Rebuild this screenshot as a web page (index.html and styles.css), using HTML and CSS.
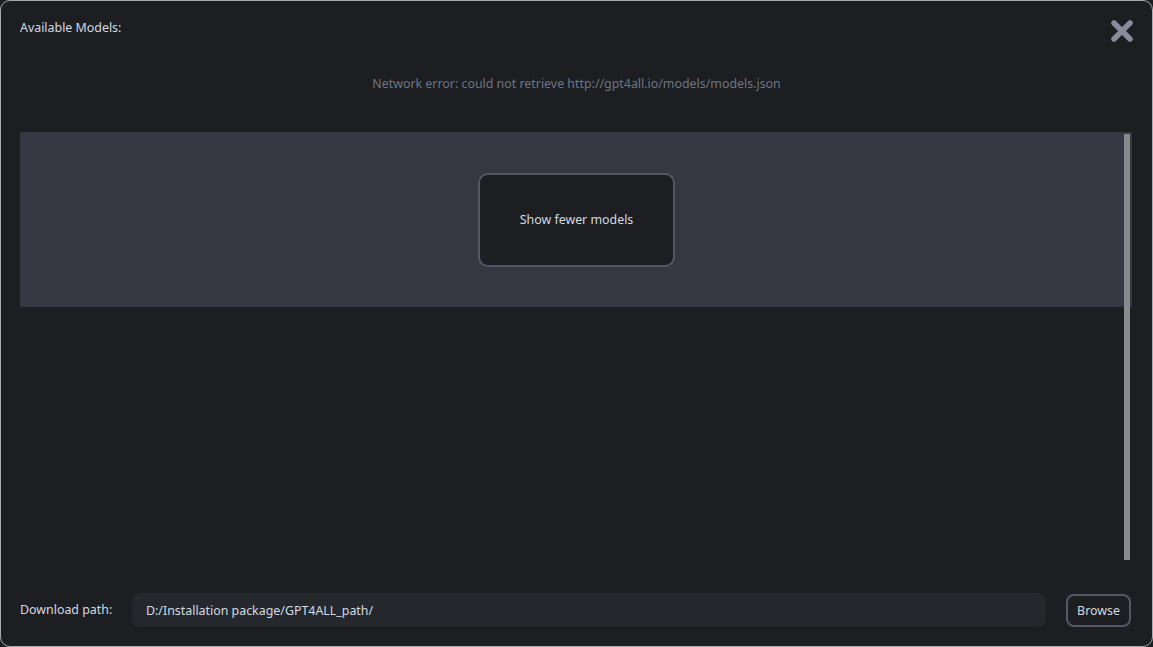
FILE: index.html
```html
<!DOCTYPE html>
<html>
<head>
<meta charset="utf-8">
<link rel="stylesheet" href="styles.css">
</head>
<body>
<div class="window">
  <div class="header">
    <div class="title">Available Models:</div>
    <div class="close">
      <svg width="24" height="24" viewBox="0 0 24 24"><path d="M4 4 L20 20 M20 4 L4 20" stroke="#8a8a9c" stroke-width="5.5" stroke-linecap="round"/></svg>
    </div>
  </div>
  <div class="error">Network error: could not retrieve http://gpt4all.io/models/models.json</div>
  <div class="listarea">
    <div class="list">
      <div class="panel">
        <button class="fewer">Show fewer models</button>
      </div>
    </div>
    <div class="scrollbar"><div class="thumb"></div></div>
  </div>
  <div class="footer">
    <div class="label">Download path:</div>
    <div class="path">D:/Installation package/GPT4ALL_path/</div>
    <button class="browse">Browse</button>
  </div>
</div>
</body>
</html>
```
FILE: styles.css
```css
* { box-sizing: border-box; }
html, body { margin: 0; padding: 0; background: #1c1e21; }
body { width: 1153px; height: 647px; overflow: hidden; font-family: "Noto Sans", "Open Sans", sans-serif; font-size: 12.4px; color: #d4dae2; }
.window { width: 1153px; height: 647px; border: 1px solid #a9a9b0; border-radius: 10px; background: #1c1e21; display: flex; flex-direction: column; }
.header { display: flex; justify-content: space-between; align-items: center; padding: 13px 19px 0 19px; height: 40px; }
.title { color: #d4dae2; }
.close { width: 24px; height: 24px; margin-right: -1px; margin-top: 6px; }
.close svg { display: block; }
.error { text-align: center; color: #6f7582; margin-top: 28px; height: 30px; line-height: 30px; }
.listarea { flex: 1; display: flex; margin: 33px 20px 0 19px; position: relative; }
.list { flex: 1; }
.panel { background: #373643; height: 175px; display: flex; align-items: center; justify-content: center; padding-left: 1px; }
.fewer { width: 197px; height: 94px; border: 2px solid #565565; border-radius: 10px; background: #1c1e21; color: #d4dae2; font: inherit; }
.scrollbar { position: absolute; right: 2px; top: 2px; width: 6px; height: 426px; }
.thumb { width: 6px; height: 100%; background: #8a8a8c; }
.footer { display: flex; align-items: flex-end; padding: 0 21px 19px 19px; height: 60px; }
.label { width: 112px; height: 34px; line-height: 34px; }
.path { flex: 1; height: 34px; background: #24272b; border-radius: 8px; display: flex; align-items: center; padding-left: 14px; }
.browse { margin-left: 20px; width: 65px; height: 33px; border: 2px solid #575766; border-radius: 8px; background: #1c1e21; color: #d4dae2; font: inherit; }
```
